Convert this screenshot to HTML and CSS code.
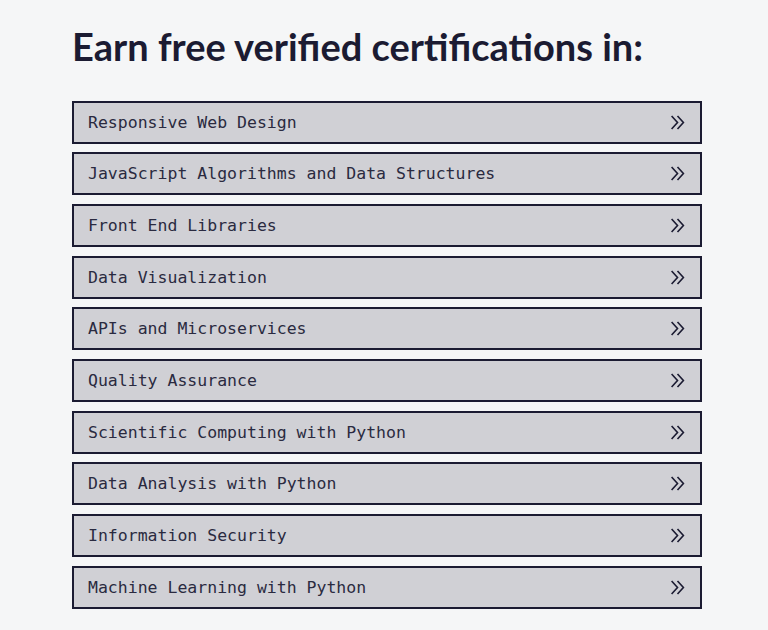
FILE: index.html
```html
<!DOCTYPE html>
<html lang="en">
<head>
<meta charset="utf-8">
<title>Certifications</title>
<link rel="stylesheet" href="styles.css">
</head>
<body>
<main class="page">
  <h2 class="title">Earn free verified certifications in:</h2>
  <ul class="cert-list">
    <li><a class="cert" href="#"><span>Responsive Web Design</span><svg class="chev" viewBox="0 0 14 14"><path d="M1.5 1 L7 7 L1.5 13 M7 1 L12.5 7 L7 13"/></svg></a></li>
    <li><a class="cert" href="#"><span>JavaScript Algorithms and Data Structures</span><svg class="chev" viewBox="0 0 14 14"><path d="M1.5 1 L7 7 L1.5 13 M7 1 L12.5 7 L7 13"/></svg></a></li>
    <li><a class="cert" href="#"><span>Front End Libraries</span><svg class="chev" viewBox="0 0 14 14"><path d="M1.5 1 L7 7 L1.5 13 M7 1 L12.5 7 L7 13"/></svg></a></li>
    <li><a class="cert" href="#"><span>Data Visualization</span><svg class="chev" viewBox="0 0 14 14"><path d="M1.5 1 L7 7 L1.5 13 M7 1 L12.5 7 L7 13"/></svg></a></li>
    <li><a class="cert" href="#"><span>APIs and Microservices</span><svg class="chev" viewBox="0 0 14 14"><path d="M1.5 1 L7 7 L1.5 13 M7 1 L12.5 7 L7 13"/></svg></a></li>
    <li><a class="cert" href="#"><span>Quality Assurance</span><svg class="chev" viewBox="0 0 14 14"><path d="M1.5 1 L7 7 L1.5 13 M7 1 L12.5 7 L7 13"/></svg></a></li>
    <li><a class="cert" href="#"><span>Scientific Computing with Python</span><svg class="chev" viewBox="0 0 14 14"><path d="M1.5 1 L7 7 L1.5 13 M7 1 L12.5 7 L7 13"/></svg></a></li>
    <li><a class="cert" href="#"><span>Data Analysis with Python</span><svg class="chev" viewBox="0 0 14 14"><path d="M1.5 1 L7 7 L1.5 13 M7 1 L12.5 7 L7 13"/></svg></a></li>
    <li><a class="cert" href="#"><span>Information Security</span><svg class="chev" viewBox="0 0 14 14"><path d="M1.5 1 L7 7 L1.5 13 M7 1 L12.5 7 L7 13"/></svg></a></li>
    <li><a class="cert" href="#"><span>Machine Learning with Python</span><svg class="chev" viewBox="0 0 14 14"><path d="M1.5 1 L7 7 L1.5 13 M7 1 L12.5 7 L7 13"/></svg></a></li>
  </ul>
</main>
</body>
</html>
```
FILE: styles.css
```css
html, body {
  margin: 0;
  padding: 0;
  background: #f5f6f7;
}
.page {
  width: 630px;
  margin: 0 0 0 72px;
  padding-top: 24px;
}
.title {
  margin: 0 0 31px 0;
  font-family: Lato, "Noto Sans", sans-serif;
  font-weight: 700;
  font-size: 38px;
  line-height: 1.2;
  color: #1b1b32;
}
.cert-list {
  list-style: none;
  margin: 0;
  padding: 0;
  display: flex;
  flex-direction: column;
  gap: 8.67px;
}
.cert {
  display: flex;
  align-items: center;
  justify-content: space-between;
  box-sizing: border-box;
  height: 43px;
  padding: 0 15px 0 14px;
  background: #d0d0d5;
  border: 2px solid #1b1b32;
  color: #2a2a40;
  text-decoration: none;
  font-family: "DejaVu Sans Mono", "Liberation Mono", monospace;
  font-size: 16.5px;
}
.chev {
  width: 15px;
  height: 15px;
  fill: none;
  stroke: #1b1b32;
  stroke-width: 1.5;
}
```
